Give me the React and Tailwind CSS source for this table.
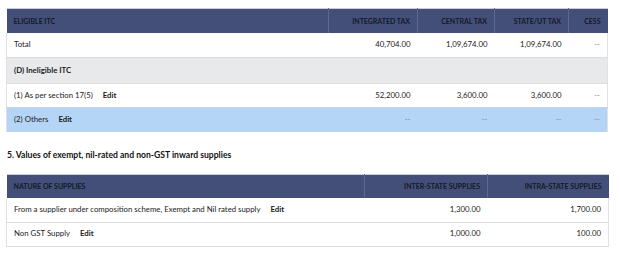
import React from "react";

const font = { fontFamily: 'Lato, "Open Sans", "Liberation Sans", sans-serif' };

function Edit() {
  return <span className="ml-[10px] font-bold text-[#1b1b1b]">Edit</span>;
}

function Dash() {
  return <span className="text-[#8a8a8a]">--</span>;
}

export default function App() {
  const th = "h-[24px] px-[7px] text-[7px] font-bold uppercase text-[#131827] border-l border-[#5d6890] first:border-l-0";
  const td = "px-[7px] text-[7.8px] text-[#222]";
  return (
    <div className="w-[621px] h-[254px] bg-white pt-[8px] pl-[6px]" style={font}>
      <table className="w-[601px] table-fixed border-collapse">
        <colgroup>
          <col className="w-[322px]" />
          <col className="w-[89px]" />
          <col className="w-[77px]" />
          <col className="w-[74px]" />
          <col className="w-[39px]" />
        </colgroup>
        <thead>
          <tr className="bg-[#444f79] border-t border-[#c9cfe0]">
            <th className={th + " text-left"}>Eligible ITC</th>
            <th className={th + " text-right"}>Integrated Tax</th>
            <th className={th + " text-right"}>Central Tax</th>
            <th className={th + " text-right"}>State/UT Tax</th>
            <th className={th + " text-right"}>Cess</th>
          </tr>
        </thead>
        <tbody className="border-x border-[#e2e2e2]">
          <tr className="h-[25px] bg-white border-b border-[#dedede]">
            <td className={td}>Total</td>
            <td className={td + " text-right"}>40,704.00</td>
            <td className={td + " text-right"}>1,09,674.00</td>
            <td className={td + " text-right"}>1,09,674.00</td>
            <td className={td + " text-right"}><Dash /></td>
          </tr>
          <tr className="h-[26px] bg-[#e8e9eb] border-b border-[#dedede]">
            <td className={td + " font-bold text-[#111]"}>(D) Ineligible ITC</td>
            <td className={td}></td>
            <td className={td}></td>
            <td className={td}></td>
            <td className={td}></td>
          </tr>
          <tr className="h-[24px] bg-white border-b border-[#c8d4e4]">
            <td className={td}>(1) As per section 17(5)<Edit /></td>
            <td className={td + " text-right"}>52,200.00</td>
            <td className={td + " text-right"}>3,600.00</td>
            <td className={td + " text-right"}>3,600.00</td>
            <td className={td + " text-right"}><Dash /></td>
          </tr>
          <tr className="h-[24px] bg-[#b4d5f6]">
            <td className={td}>(2) Others<Edit /></td>
            <td className={td + " text-right"}><Dash /></td>
            <td className={td + " text-right"}><Dash /></td>
            <td className={td + " text-right"}><Dash /></td>
            <td className={td + " text-right"}><Dash /></td>
          </tr>
        </tbody>
      </table>

      <div className="mt-[19px] h-[10px] flex items-center pl-px text-[8.6px] font-bold text-[#111]">
        5. Values of exempt, nil-rated and non-GST inward supplies
      </div>

      <table className="mt-[13px] w-[602px] table-fixed border-collapse">
        <colgroup>
          <col className="w-[358px]" />
          <col className="w-[123px]" />
          <col className="w-[121px]" />
        </colgroup>
        <thead>
          <tr className="bg-[#444f79] border-t border-[#c9cfe0]">
            <th className={th + " text-left"}>Nature of Supplies</th>
            <th className={th + " text-right"}>Inter-State Supplies</th>
            <th className={th + " text-right"}>Intra-State Supplies</th>
          </tr>
        </thead>
        <tbody className="border-x border-[#e2e2e2]">
          <tr className="h-[24px] bg-white border-b border-[#dedede]">
            <td className={td}>From a supplier under composition scheme, Exempt and Nil rated supply<Edit /></td>
            <td className={td + " text-right"}>1,300.00</td>
            <td className={td + " text-right"}>1,700.00</td>
          </tr>
          <tr className="h-[24px] bg-white border-b border-[#dedede]">
            <td className={td}>Non GST Supply<Edit /></td>
            <td className={td + " text-right"}>1,000.00</td>
            <td className={td + " text-right"}>100.00</td>
          </tr>
        </tbody>
      </table>
    </div>
  );
}
